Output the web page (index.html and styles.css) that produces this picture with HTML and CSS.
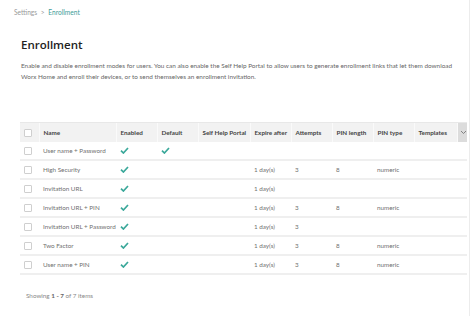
FILE: index.html
```html
<!DOCTYPE html>
<html lang="en">
<head>
  <meta charset="UTF-8" />
  <title>Enrollment</title>
  <link rel="stylesheet" href="styles.css">
</head>
<body>
  <div class="page">
    <div class="crumbs">
      <span>Settings</span>
      <span class="sep">&gt;</span>
      <span class="current">Enrollment</span>
    </div>

    <h1>Enrollment</h1>
    <p class="intro">Enable and disable enrollment modes for users. You can also enable the Self Help Portal to allow users to generate enrollment links that let them download Worx Home and enroll their devices, or to send themselves an enrollment invitation.</p>

    <table class="grid">
      <colgroup>
        <col style="width:19px"><col style="width:77px"><col style="width:41px"><col style="width:41px">
        <col style="width:52px"><col style="width:41px"><col style="width:41px"><col style="width:41px">
        <col style="width:41px"><col style="width:43px"><col style="width:10px">
      </colgroup>
      <thead>
        <tr>
          <th><span class="box"></span></th>
          <th>Name</th>
          <th>Enabled</th>
          <th>Default</th>
          <th>Self Help Portal</th>
          <th>Expire after</th>
          <th>Attempts</th>
          <th>PIN length</th>
          <th>PIN type</th>
          <th>Templates</th>
          <th class="more">
            <svg width="7" height="5" viewBox="0 0 7 5"><polyline points="1,1 3.5,3.5 6,1" fill="none" stroke="#777" stroke-width="0.9"/></svg>
          </th>
        </tr>
      </thead>
      <tbody id="rows"></tbody>
    </table>

    <div class="footer">Showing <b>1 - 7</b> of 7 items</div>
  </div>

  <script>
    const modes = [
      ['User name + Password', true, true, '', '', '', ''],
      ['High Security', true, false, '1 day(s)', '3', '8', 'numeric'],
      ['Invitation URL', true, false, '1 day(s)', '', '', ''],
      ['Invitation URL + PIN', true, false, '1 day(s)', '3', '8', 'numeric'],
      ['Invitation URL + Password', true, false, '1 day(s)', '3', '', ''],
      ['Two Factor', true, false, '1 day(s)', '3', '8', 'numeric'],
      ['User name + PIN', true, false, '1 day(s)', '3', '8', 'numeric']
    ];

    const tick = '<svg class="tick" width="9" height="7" viewBox="0 0 9 7"><polyline points="1,3.6 3.4,6 8,1" fill="none" stroke="#3aa89a" stroke-width="1.7"/></svg>';

    const body = document.getElementById('rows');
    modes.forEach(m => {
      body.innerHTML += `
        <tr>
          <td><span class="box"></span></td>
          <td>${m[0]}</td>
          <td>${m[1] ? tick : ''}</td>
          <td>${m[2] ? tick : ''}</td>
          <td></td>
          <td>${m[3]}</td>
          <td>${m[4]}</td>
          <td>${m[5]}</td>
          <td>${m[6]}</td>
          <td></td>
          <td></td>
        </tr>`;
    });
  </script>
</body>
</html>
```

FILE: styles.css
```css
body {
  margin: 0;
  background: #fff;
  font-family: Lato, "Open Sans", sans-serif;
  color: #555;
}
.page {
  width: 470px;
  height: 316px;
  box-sizing: border-box;
  border-right: 1px solid #ececec;
  padding: 7px 0 0 14px;
}
.crumbs {
  font-size: 6.6px;
  color: #999;
  line-height: 10px;
}
.crumbs .sep {
  margin: 0 2px;
}
.crumbs .current {
  color: #3d9d98;
}
h1 {
  margin: 20px 0 0 7px;
  font-family: "Open Sans", sans-serif;
  font-size: 11.5px;
  font-weight: 600;
  color: #222;
  line-height: 16px;
}
.intro {
  margin: 7px 0 0 7px;
  width: 438px;
  font-size: 6.4px;
  line-height: 11px;
  color: #666;
}
.grid {
  margin: 40px 0 0 6px;
  width: 447px;
  table-layout: fixed;
  border-collapse: collapse;
  font-size: 6.3px;
}
.grid th {
  height: 19px;
  padding: 0 0 0 4px;
  background: #f2f2f2;
  border-left: 1px solid #fafafa;
  border-top: 1px solid #e8e8e8;
  text-align: left;
  font-weight: 700;
  color: #444;
  white-space: nowrap;
  overflow: hidden;
}
.grid th:first-child {
  border-left: none;
}
.grid th.more {
  background: #dcdcdc;
  padding: 0 0 0 2px;
}
.grid td {
  height: 17px;
  padding: 0 0 0 4px;
  border-bottom: 2px solid #efefef;
  color: #707070;
  white-space: nowrap;
  overflow: hidden;
}
.box {
  display: inline-block;
  width: 6px;
  height: 6px;
  border: 1px solid #cfcfcf;
  border-radius: 1px;
  vertical-align: middle;
  background: #fff;
}
.tick {
  vertical-align: middle;
}
.footer {
  margin: 17px 0 0 12px;
  font-size: 6.3px;
  color: #888;
}
.footer b {
  font-weight: 700;
  color: #666;
}
```
